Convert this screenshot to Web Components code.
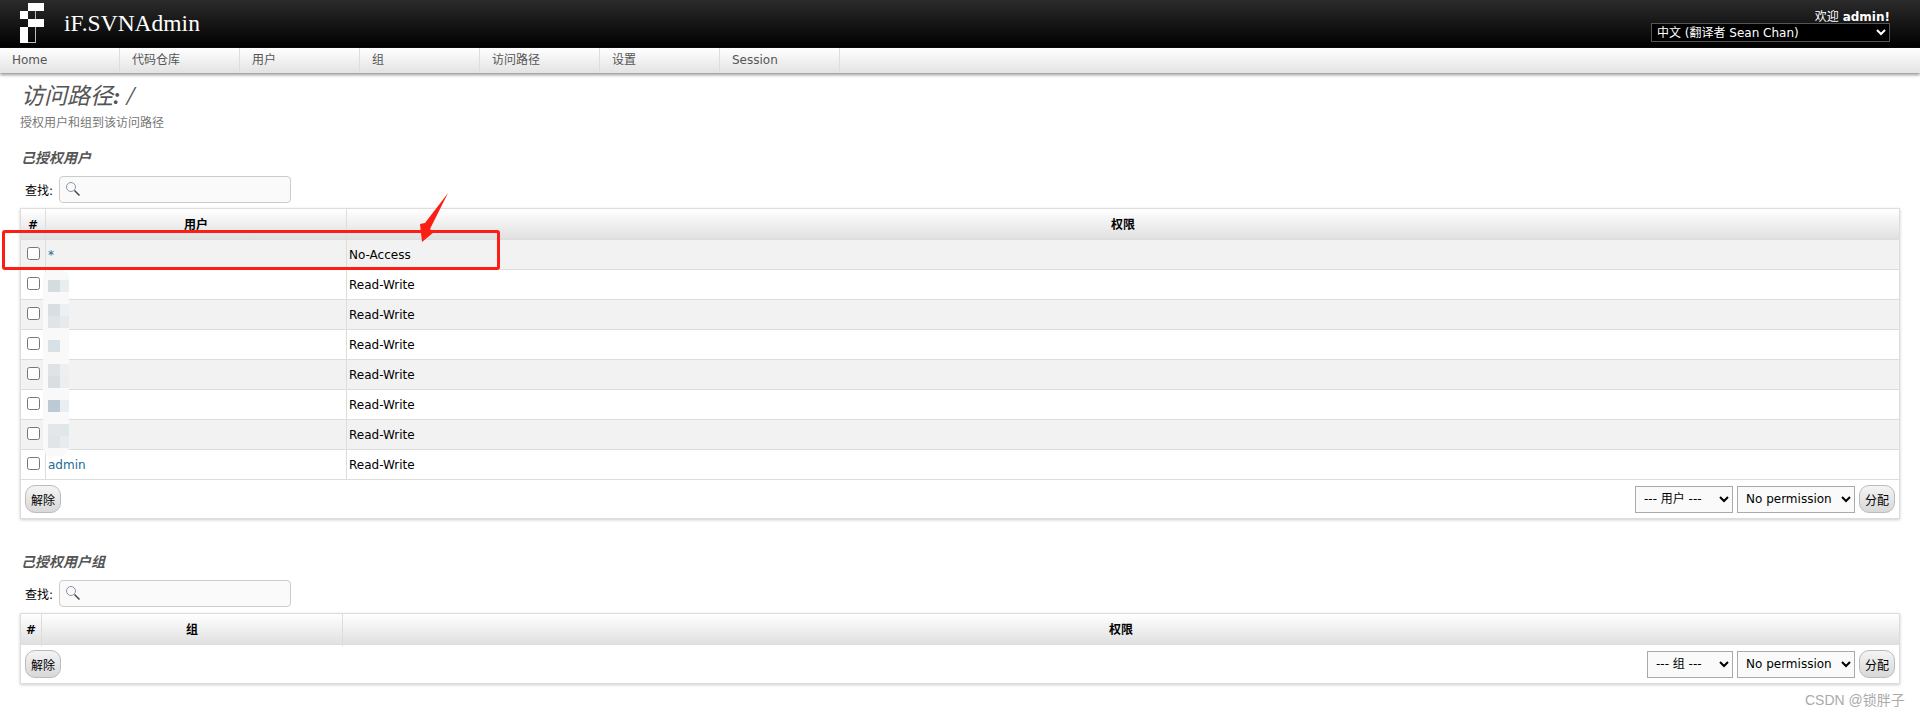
<!DOCTYPE html>
<html lang="zh">
<head>
<meta charset="utf-8">
<title>iF.SVNAdmin</title>
<style>
html, body { margin: 0; padding: 0; background: #fff; }
body { font: 12px "DejaVu Sans", "Noto Sans CJK SC", sans-serif; color: #000; position: relative; height: 717px; overflow: hidden; }
</style>
</head>
<body>
<svn-header></svn-header>
<svn-nav>
  <a>Home</a><a>代码仓库</a><a>用户</a><a>组</a><a>访问路径</a><a>设置</a><a>Session</a>
</svn-nav>
<svn-title path="访问路径" desc="授权用户和组到该访问路径"><span>/</span></svn-title>

<svn-section heading="己授权用户" style="--top: 20px; --gap: 5px">
  <svn-table col-a="25px" col-b="301px" first="用户" second="权限" kind="--- 用户 ---" kind-width="98px">
    <svn-row who="*" perm="No-Access" small></svn-row>
    <svn-row perm="Read-Write"></svn-row>
    <svn-row perm="Read-Write"></svn-row>
    <svn-row perm="Read-Write"></svn-row>
    <svn-row perm="Read-Write"></svn-row>
    <svn-row perm="Read-Write"></svn-row>
    <svn-row perm="Read-Write"></svn-row>
    <svn-row who="admin" perm="Read-Write"></svn-row>
    <svn-mosaic></svn-mosaic>
  </svn-table>
</svn-section>

<svn-section heading="己授权用户组" style="--top: 36px; --gap: 6px">
  <svn-table col-a="21px" col-b="301px" first="组" second="权限" kind="--- 组 ---" kind-width="86px"></svn-table>
</svn-section>

<svn-callout></svn-callout>
<svn-watermark>CSDN @锁胖子</svn-watermark>

<script>
const FONT = '"DejaVu Sans", "Noto Sans CJK SC", sans-serif';

class SvnHeader extends HTMLElement {
    constructor() {
        super();
        this.attachShadow({ mode: 'open' }).innerHTML = `
<style>
:host { display: flex; align-items: stretch; justify-content: space-between; height: 48px; box-sizing: border-box; padding: 0 30px 0 20px; background: linear-gradient(#2b2b2b, #000); color: #fff; }
.brand { display: flex; align-items: center; gap: 20px; }
.brand span { font: 23.5px/1 "Liberation Serif", serif; }
svg { display: block; }
.user { display: flex; flex-direction: column; align-items: flex-end; padding-top: 11px; font: 12px/12px ${FONT}; }
select { width: 239px; height: 19px; margin-top: 0; padding: 0 0 0 1px; background: #000; color: #fff; border: 1px solid #555; border-radius: 0; font: 12px ${FONT}; }
</style>
<div class="brand">
  <svg width="24" height="40" viewBox="0 0 24 40" style="margin-top:-2px">
    <path fill="#fff" d="M8 0h16v8H8zM0 8h8v8H0zM8 16h16v8H8zM0 24h8v16H0z"/>
    <path fill="#bbb" d="M15 8h1v8h-1zM15 24h1v16h-1zM8 39h8v1H8z"/>
  </svg>
  <span>iF.SVNAdmin</span>
</div>
<div class="user">
  <div>欢迎 <b>admin!</b></div>
  <select><option>中文 (翻译者 Sean Chan)</option></select>
</div>`;
    }
}

class SvnNav extends HTMLElement {
    constructor() {
        super();
        this.attachShadow({ mode: 'open' }).innerHTML = `
<style>
:host { display: flex; height: 25px; background: linear-gradient(#fff, #e3e3e3); box-shadow: 0 2px 3px #999; position: relative; font: 12px/25px ${FONT}; color: #555; }
::slotted(a) { display: block; box-sizing: border-box; width: 120px; padding-left: 12px; border-right: 1px solid #ddd; }
</style>
<slot></slot>`;
    }
}

class SvnTitle extends HTMLElement {
    constructor() {
        super();
        this.attachShadow({ mode: 'open' }).innerHTML = `
<style>
:host { display: block; padding: 10px 20px 0; }
h1 { margin: 0 0 0 1px; font: italic 23px/27px "Liberation Serif", "Noto Sans CJK SC", serif; color: #555; }
b { font-weight: bold; }
::slotted(span) { font-size: 28px; line-height: 0; vertical-align: -1px; }
p { margin: 5px 0 0; font: 12px/16px ${FONT}; color: #777; }
</style>
<h1><span class="path"></span><b>:</b> <slot></slot></h1><p></p>`;
        this.shadowRoot.querySelector('.path').textContent = this.getAttribute('path');
        this.shadowRoot.querySelector('p').textContent = this.getAttribute('desc');
    }
}

class SvnSection extends HTMLElement {
    constructor() {
        super();
        this.attachShadow({ mode: 'open' }).innerHTML = `
<style>
:host { display: block; padding: var(--top, 20px) 20px 0; }
h2 { margin: 0 0 0 1px; font: italic bold 14px/15px ${FONT}; color: #555; }
.search { display: flex; align-items: center; gap: 6px; height: 27px; margin: 10px 0 var(--gap, 5px) 5px; font: 12px ${FONT}; }
.box { box-sizing: border-box; width: 232px; height: 27px; padding: 4px 0 0 5px; background: #fafafa; border: 1px solid #ccc; border-radius: 4px; }
svg { display: block; }
</style>
<h2></h2>
<div class="search">
  <span>查找:</span>
  <div class="box">
    <svg width="16" height="16" viewBox="0 0 16 16" fill="none">
      <circle cx="6" cy="6" r="4.5" stroke="#8a95a5"/>
      <path d="M9.5 9.5l5 5" stroke="#444" stroke-width="1.5"/>
    </svg>
  </div>
</div>
<slot></slot>`;
        this.shadowRoot.querySelector('h2').textContent = this.getAttribute('heading');
    }
}

class SvnTable extends HTMLElement {
    constructor() {
        super();
        this.attachShadow({ mode: 'open' }).innerHTML = `
<style>
:host { display: block; position: relative; border: 1px solid #ddd; box-shadow: 0 1px 3px #ccc; background: #fff; font: 12px ${FONT}; }
.head { display: grid; height: 31px; box-sizing: border-box; background: linear-gradient(#fff, #e0e0e0); border-bottom: 1px solid #ddd; font-weight: bold; text-align: center; line-height: 32px; }
.head div { border-right: 1px solid #ddd; }
.head div:last-child { border-right: 0; }
.foot { display: flex; align-items: center; justify-content: space-between; height: 38px; padding: 0 4px 0 4px; }
.right { display: flex; align-items: center; gap: 4px; }
button { box-sizing: border-box; width: 36px; height: 28px; padding: 0; border: 1px solid #bbb; border-radius: 10px; background: linear-gradient(#f4f4f4, #d8d8d8); color: #000; font: 12px ${FONT}; }
select { box-sizing: border-box; height: 27px; padding: 0 0 0 4px; background: #fafafa; color: #000; border: 1px solid #aaa; border-radius: 0; font: 12px ${FONT}; }
select.perm { width: 118px; }
</style>
<div class="head"><div>#</div><div class="a"></div><div class="b"></div></div>
<slot></slot>
<div class="foot">
  <button>解除</button>
  <div class="right">
    <select class="kind"><option></option></select>
    <select class="perm"><option>No permission</option></select>
    <button>分配</button>
  </div>
</div>`;
        const root = this.shadowRoot;
        const cols = `${this.getAttribute('col-a')} ${this.getAttribute('col-b')} 1fr`;
        this.style.setProperty('--cols', cols);
        root.querySelector('.head').style.gridTemplateColumns = cols;
        root.querySelector('.a').textContent = this.getAttribute('first');
        root.querySelector('.b').textContent = this.getAttribute('second');
        const kind = root.querySelector('.kind');
        kind.options[0].textContent = this.getAttribute('kind');
        kind.style.width = this.getAttribute('kind-width');
    }
}

class SvnRow extends HTMLElement {
    constructor() {
        super();
        this.attachShadow({ mode: 'open' }).innerHTML = `
<style>
:host { display: grid; grid-template-columns: var(--cols); height: 30px; box-sizing: border-box; border-bottom: 1px solid #ddd; line-height: 30px; }
:host(:nth-of-type(odd)) { background: #f2f2f2; }
div { border-right: 1px solid #ddd; box-sizing: border-box; }
div:last-child { border-right: 0; padding-left: 2px; }
.who { padding-left: 2px; color: #226c94; }
input { display: block; box-sizing: border-box; width: 13px; height: 13px; margin: 7px 0 0 6px; appearance: none; background: #fff; border: 1px solid #767676; border-radius: 2.5px; }
</style>
<div><input type="checkbox"></div><div class="who"></div><div></div>`;
        const cells = this.shadowRoot.querySelectorAll('div');
        cells[1].textContent = this.getAttribute('who') || '';
        cells[2].textContent = this.getAttribute('perm');
    }
}

// 打码的用户名，盖在表格上
const TILES = [
    [10, null, null], [12, '#d5dce0', '#e8edf0'], [12, null, null],
    [12, '#d8dee2', '#ecf0f2'], [12, '#dfe4e7', '#e6eaec'], [12, null, null],
    [12, '#d8e1e6', null], [12, null, null],
    [12, '#dfe3e6', '#eeeff1'], [12, '#d8dee2', '#eceef0'], [12, null, null],
    [12, '#bccad3', '#e8eef2'], [12, null, null],
    [12, '#e4e7e7', '#e0e7ea'], [12, '#e1e5e8', '#e6ecef'], [8, null, null]
];

class SvnMosaic extends HTMLElement {
    constructor() {
        super();
        this.attachShadow({ mode: 'open' }).innerHTML = `
<style>
:host { position: absolute; left: 22px; top: 61px; width: 26px; display: grid; grid-template-columns: 5px 12px 9px; background: #f9f9f9; border-radius: 8px; }
i { display: block; }
</style>`;
        for (const [h, a, b] of TILES) {
            const row = [null, a, b];
            for (const color of row) {
                const tile = document.createElement('i');
                tile.style.height = h + 'px';
                if (color) tile.style.background = color;
                this.shadowRoot.append(tile);
            }
        }
    }
}

class SvnCallout extends HTMLElement {
    constructor() {
        super();
        this.attachShadow({ mode: 'open' }).innerHTML = `
<style>
:host { position: absolute; left: 0; top: 0; }
.box { position: absolute; left: 2px; top: 230px; width: 498px; height: 40px; box-sizing: border-box; border: 3px solid #fb1e14; border-radius: 3px; }
svg { position: absolute; left: 415px; top: 190px; }
</style>
<div class="box"></div>
<svg width="40" height="56" viewBox="415 190 40 56"><path fill="#fb1e14" d="M448 193L425 223 420 224 422 242 434 232 430 229z"/></svg>`;
    }
}

class SvnWatermark extends HTMLElement {
    constructor() {
        super();
        this.attachShadow({ mode: 'open' }).innerHTML = `
<style>
:host { position: absolute; left: 1805px; top: 691px; font: 14px/18px "Liberation Sans", "Noto Sans CJK SC", sans-serif; color: #aaa; white-space: nowrap; }
</style>
<slot></slot>`;
    }
}

customElements.define('svn-header', SvnHeader);
customElements.define('svn-nav', SvnNav);
customElements.define('svn-title', SvnTitle);
customElements.define('svn-section', SvnSection);
customElements.define('svn-table', SvnTable);
customElements.define('svn-row', SvnRow);
customElements.define('svn-mosaic', SvnMosaic);
customElements.define('svn-callout', SvnCallout);
customElements.define('svn-watermark', SvnWatermark);
</script>
</body>
</html>
